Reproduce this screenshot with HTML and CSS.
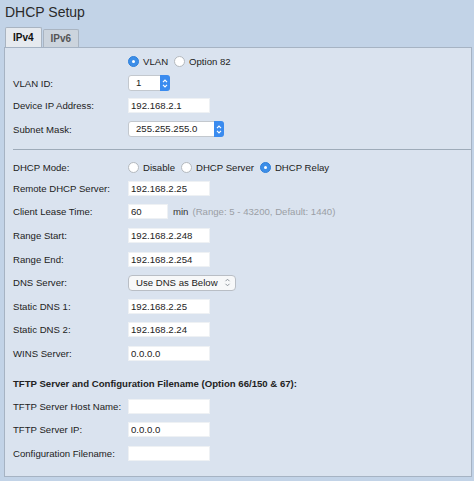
FILE: index.html
```html
<!DOCTYPE html>
<html lang="en">
<head>
    <meta charset="utf-8" />
    <title>DHCP Setup</title>
    <link rel="stylesheet" href="styles.css">
</head>
<body>

    <!-- Title -->
    <h1 class="page-title">DHCP Setup</h1>

    <!-- Tabs -->
    <div class="tabs">
        <div class="tab tab-active">IPv4</div>
        <div class="tab">IPv6</div>
    </div>

    <!-- Form panel -->
    <div class="panel">
        <div class="row row-a">
            <span class="label"></span>
            <div class="radios">
                <span class="radio radio-on"></span><span class="radio-text">VLAN</span>
                <span class="radio"></span><span class="radio-text">Option 82</span>
            </div>
        </div>
        <div class="row row-a">
            <span class="label">VLAN ID:</span>
            <div class="select select-vlan"><span class="select-value">1</span><span class="stepper"><svg width="10" height="15" viewBox="0 0 10 15"><path d="M3 6.2 L5 4.2 L7 6.2 M3 8.8 L5 10.8 L7 8.8" fill="none" stroke="#fff" stroke-width="1.2"/></svg></span></div>
        </div>
        <div class="row">
            <span class="label">Device IP Address:</span>
            <input class="field" type="text" value="192.168.2.1">
        </div>
        <div class="row">
            <span class="label">Subnet Mask:</span>
            <div class="select select-mask"><span class="select-value">255.255.255.0</span><span class="stepper"><svg width="10" height="15" viewBox="0 0 10 15"><path d="M3 6.2 L5 4.2 L7 6.2 M3 8.8 L5 10.8 L7 8.8" fill="none" stroke="#fff" stroke-width="1.2"/></svg></span></div>
        </div>

        <hr class="divider">

        <div class="row row-mode">
            <span class="label">DHCP Mode:</span>
            <div class="radios">
                <span class="radio"></span><span class="radio-text">Disable</span>
                <span class="radio"></span><span class="radio-text">DHCP Server</span>
                <span class="radio radio-on"></span><span class="radio-text">DHCP Relay</span>
            </div>
        </div>
        <div class="row row-b">
            <span class="label">Remote DHCP Server:</span>
            <input class="field" type="text" value="192.168.2.25">
        </div>
        <div class="row">
            <span class="label">Client Lease Time:</span>
            <div class="inline">
                <input class="field field-short" type="text" value="60">
                <span class="unit">min</span>
                <span class="hint">(Range: 5 - 43200, Default: 1440)</span>
            </div>
        </div>
        <div class="row">
            <span class="label">Range Start:</span>
            <input class="field" type="text" value="192.168.2.248">
        </div>
        <div class="row">
            <span class="label">Range End:</span>
            <input class="field" type="text" value="192.168.2.254">
        </div>
        <div class="row">
            <span class="label">DNS Server:</span>
            <div class="select select-dns"><span class="select-value">Use DNS as Below</span><span class="updown"><svg width="9" height="13" viewBox="0 0 9 13"><path d="M2.5 5.2 L4.5 3.2 L6.5 5.2 M2.5 7.8 L4.5 9.8 L6.5 7.8" fill="none" stroke="#8e959c" stroke-width="1"/></svg></span></div>
        </div>
        <div class="row">
            <span class="label">Static DNS 1:</span>
            <input class="field" type="text" value="192.168.2.25">
        </div>
        <div class="row">
            <span class="label">Static DNS 2:</span>
            <input class="field" type="text" value="192.168.2.24">
        </div>
        <div class="row">
            <span class="label">WINS Server:</span>
            <input class="field" type="text" value="0.0.0.0">
        </div>

        <div class="subheading">TFTP Server and Configuration Filename (Option 66/150 &amp; 67):</div>

        <div class="row">
            <span class="label">TFTP Server Host Name:</span>
            <input class="field" type="text" value="">
        </div>
        <div class="row">
            <span class="label">TFTP Server IP:</span>
            <input class="field" type="text" value="0.0.0.0">
        </div>
        <div class="row">
            <span class="label">Configuration Filename:</span>
            <input class="field" type="text" value="">
        </div>
    </div>

</body>
</html>
```

FILE: styles.css
```css
body {
    background-color: #c2d3e7;
    font-family: 'Liberation Sans', Arial, Helvetica, sans-serif;
    font-size: 9.6px;
    color: #222;
    margin: 0;
    padding: 0;
}

.page-title {
    margin: 2px 0 0 5px;
    font-size: 14px;
    font-weight: normal;
    line-height: 20px;
    color: #2a2a2a;
}

.tabs {
    display: flex;
    align-items: flex-end;
    gap: 1px;
    margin: 6px 0 0 5px;
    height: 19px;
}

.tab {
    height: 17px;
    padding: 0 7px;
    line-height: 17px;
    font-size: 10px;
    font-weight: bold;
    color: #555;
    background-color: #ccd4dd;
    border: 1px solid #a9b4c1;
    border-bottom: none;
    border-radius: 2px 2px 0 0;
}

    .tab-active {
        height: 19px;
        line-height: 20px;
        color: #111;
        background-color: #e6eaef;
    }

.panel {
    background-color: #dae3ef;
    border: 1px solid #a6b3c3;
    margin: 0 2px 0 4px;
    padding: 2px 8px 10px 8px;
    height: 430px;
    box-sizing: border-box;
}

.row {
    display: grid;
    grid-template-columns: 115px auto;
    align-items: center;
    height: 23.6px;
}

.row-a {
    height: 22px;
}

.row-mode {
    height: 19px;
}

.row-b {
    height: 23px;
}

.label {
    white-space: nowrap;
}

.radios {
    display: flex;
    align-items: center;
}

.radio {
    width: 9px;
    height: 9px;
    border: 1px solid #b4b9be;
    border-radius: 50%;
    background-color: #fff;
    margin-right: 4px;
    position: relative;
}

    .radio-on {
        background-color: #3c8ee8;
        border-color: #2f80da;
    }

    .radio-on::after {
        content: "";
        position: absolute;
        left: 3px;
        top: 3px;
        width: 3px;
        height: 3px;
        border-radius: 50%;
        background-color: #fff;
    }

.radio-text {
    margin-right: 6px;
}

.field {
    width: 82px;
    height: 15px;
    box-sizing: border-box;
    border: 1px solid #eef1f4;
    background-color: #fff;
    padding: 0 2px;
    margin: 0;
    font-family: inherit;
    font-size: 9.6px;
    color: #222;
    outline: none;
}

.field-short {
    width: 40px;
}

.inline {
    display: flex;
    align-items: center;
}

.unit {
    margin-left: 5px;
    color: #333;
}

.hint {
    margin-left: 4px;
    color: #9a9fa5;
}

.select {
    display: flex;
    align-items: stretch;
    height: 14px;
    background-color: #fff;
    border: 1px solid #c3c8ce;
    border-radius: 3px;
}

.select-vlan {
    width: 40px;
}

.select-mask {
    width: 94px;
}

.select-dns {
    width: 106px;
    border-color: #b9bec5;
    border-radius: 4px;
    background-color: #f7f8f9;
}

.select-value {
    flex: 1;
    padding-left: 7px;
    line-height: 14px;
}

.stepper {
    width: 10px;
    margin: -1px -1px -1px 0;
    background-color: #3a8bef;
    border-radius: 0 3px 3px 0;
    display: flex;
    align-items: center;
}

.updown {
    width: 12px;
    display: flex;
    align-items: center;
}

.divider {
    border: none;
    border-top: 1px solid #9eabb9;
    margin: 8px -8px 8px 0;
    height: 0;
}

.subheading {
    font-weight: bold;
    margin-top: 8px;
    height: 21px;
    line-height: 21px;
}
```
